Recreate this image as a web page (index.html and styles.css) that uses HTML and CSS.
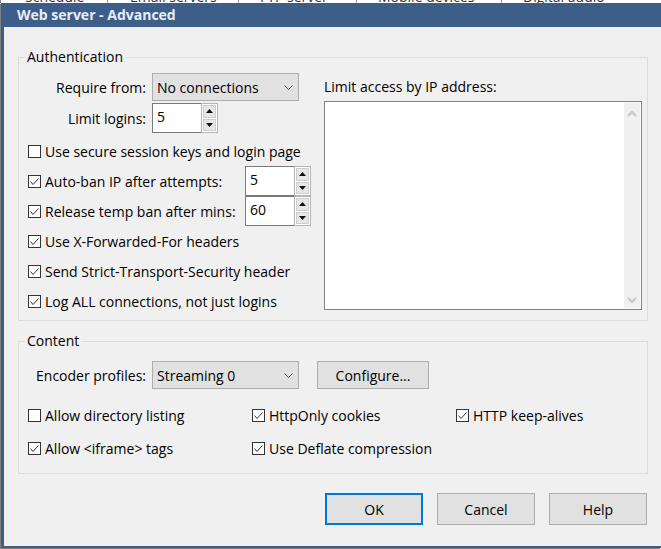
FILE: index.html
```html
<!DOCTYPE html>
<html lang="en">
<head>
<meta charset="utf-8">
<title>Web server - Advanced</title>
<link rel="stylesheet" href="styles.css">
</head>
<body>
<div class="tabstrip">
  <div class="tab tab-1"><span>Schedule</span></div>
  <div class="tab tab-2"><span>Email servers</span></div>
  <div class="tab tab-3"><span>FTP server</span></div>
  <div class="tab tab-4"><span>Mobile devices</span></div>
  <div class="tab tab-5"><span>Digital audio</span></div>
</div>
<div class="window">
  <div class="titlebar">Web server - Advanced</div>
  <div class="client">
    <fieldset class="group auth">
      <legend>Authentication</legend>
      <div class="auth-body">
        <div class="auth-left">
          <div class="field-row">
            <span class="field-label">Require from:</span>
            <div class="select"><span>No connections</span><svg class="chev" width="9" height="5" viewBox="0 0 9 5"><polyline points="0.5,0.5 4.5,4.5 8.5,0.5" fill="none" stroke="#555" stroke-width="1"/></svg></div>
          </div>
          <div class="field-row spin-field">
            <span class="field-label">Limit logins:</span>
            <div class="spinner"><div class="spin-edit">5</div><div class="spin-btns"><div class="spin-btn"><svg width="7" height="4" viewBox="0 0 7 4"><polygon points="0,4 3.5,0 7,4" fill="#111"/></svg></div><div class="spin-btn"><svg width="7" height="4" viewBox="0 0 7 4"><polygon points="0,0 3.5,4 7,0" fill="#111"/></svg></div></div></div>
          </div>
          <div class="check-row first">
            <span class="cb"></span><span>Use secure session keys and login page</span>
          </div>
          <div class="check-row">
            <div class="check-label"><span class="cb"><svg width="11" height="11" viewBox="0 0 11 11"><polyline points="1.5,5.5 4,8.5 9.5,2.5" fill="none" stroke="#333" stroke-width="1"/></svg></span><span>Auto-ban IP after attempts:</span></div>
            <div class="spinner"><div class="spin-edit">5</div><div class="spin-btns"><div class="spin-btn"><svg width="7" height="4" viewBox="0 0 7 4"><polygon points="0,4 3.5,0 7,4" fill="#111"/></svg></div><div class="spin-btn"><svg width="7" height="4" viewBox="0 0 7 4"><polygon points="0,0 3.5,4 7,0" fill="#111"/></svg></div></div></div>
          </div>
          <div class="check-row">
            <div class="check-label"><span class="cb"><svg width="11" height="11" viewBox="0 0 11 11"><polyline points="1.5,5.5 4,8.5 9.5,2.5" fill="none" stroke="#333" stroke-width="1"/></svg></span><span>Release temp ban after mins:</span></div>
            <div class="spinner"><div class="spin-edit">60</div><div class="spin-btns"><div class="spin-btn"><svg width="7" height="4" viewBox="0 0 7 4"><polygon points="0,4 3.5,0 7,4" fill="#111"/></svg></div><div class="spin-btn"><svg width="7" height="4" viewBox="0 0 7 4"><polygon points="0,0 3.5,4 7,0" fill="#111"/></svg></div></div></div>
          </div>
          <div class="check-row">
            <span class="cb"><svg width="11" height="11" viewBox="0 0 11 11"><polyline points="1.5,5.5 4,8.5 9.5,2.5" fill="none" stroke="#333" stroke-width="1"/></svg></span><span>Use X-Forwarded-For headers</span>
          </div>
          <div class="check-row">
            <span class="cb"><svg width="11" height="11" viewBox="0 0 11 11"><polyline points="1.5,5.5 4,8.5 9.5,2.5" fill="none" stroke="#333" stroke-width="1"/></svg></span><span>Send Strict-Transport-Security header</span>
          </div>
          <div class="check-row">
            <span class="cb"><svg width="11" height="11" viewBox="0 0 11 11"><polyline points="1.5,5.5 4,8.5 9.5,2.5" fill="none" stroke="#333" stroke-width="1"/></svg></span><span>Log ALL connections, not just logins</span>
          </div>
        </div>
        <div class="auth-right">
          <div class="ip-label">Limit access by IP address:</div>
          <div class="iplist">
            <div class="vscroll">
              <svg width="10" height="6" viewBox="0 0 10 6"><polyline points="1,5 5,1 9,5" fill="none" stroke="#c4c4c4" stroke-width="2"/></svg>
              <svg width="10" height="6" viewBox="0 0 10 6"><polyline points="1,1 5,5 9,1" fill="none" stroke="#c4c4c4" stroke-width="2"/></svg>
            </div>
          </div>
        </div>
      </div>
    </fieldset>

    <fieldset class="group content">
      <legend>Content</legend>
      <div class="content-body">
        <div class="field-row">
          <span class="field-label">Encoder profiles:</span>
          <div class="select"><span>Streaming 0</span><svg class="chev" width="9" height="5" viewBox="0 0 9 5"><polyline points="0.5,0.5 4.5,4.5 8.5,0.5" fill="none" stroke="#555" stroke-width="1"/></svg></div>
          <div class="btn configure">Configure...</div>
        </div>
        <div class="check-grid">
          <div class="check-cell"><span class="cb"></span><span>Allow directory listing</span></div>
          <div class="check-cell"><span class="cb"><svg width="11" height="11" viewBox="0 0 11 11"><polyline points="1.5,5.5 4,8.5 9.5,2.5" fill="none" stroke="#333" stroke-width="1"/></svg></span><span>HttpOnly cookies</span></div>
          <div class="check-cell"><span class="cb"><svg width="11" height="11" viewBox="0 0 11 11"><polyline points="1.5,5.5 4,8.5 9.5,2.5" fill="none" stroke="#333" stroke-width="1"/></svg></span><span>HTTP keep-alives</span></div>
          <div class="check-cell"><span class="cb"><svg width="11" height="11" viewBox="0 0 11 11"><polyline points="1.5,5.5 4,8.5 9.5,2.5" fill="none" stroke="#333" stroke-width="1"/></svg></span><span>Allow &lt;iframe&gt; tags</span></div>
          <div class="check-cell"><span class="cb"><svg width="11" height="11" viewBox="0 0 11 11"><polyline points="1.5,5.5 4,8.5 9.5,2.5" fill="none" stroke="#333" stroke-width="1"/></svg></span><span>Use Deflate compression</span></div>
        </div>
      </div>
    </fieldset>

    <div class="buttons">
      <div class="btn default">OK</div>
      <div class="btn">Cancel</div>
      <div class="btn">Help</div>
    </div>
  </div>
</div>
</body>
</html>
```
FILE: styles.css
```css
* { box-sizing: border-box; }
html, body { margin: 0; padding: 0; }
body {
  width: 661px;
  height: 549px;
  overflow: hidden;
  background: #fff;
  font-family: "Open Sans", "Noto Sans", sans-serif;
  font-size: 14px;
  color: #000;
}

/* tab strip of parent window, almost fully hidden */
.tabstrip {
  height: 3px;
  overflow: hidden;
  display: flex;
  align-items: flex-end;
  background: #fff;
  border-left: 1px solid #808080;
}
.tab {
  flex: none;
  height: 12px;
  line-height: 12px;
  font-size: 14px;
  color: #333;
  border-right: 1px solid #a0a0a0;
  white-space: nowrap;
}
.tab-1 { width: 107px; padding-left: 24px; }
.tab-2 { width: 131px; padding-left: 22px; }
.tab-3 { width: 118px; padding-left: 21px; }
.tab-4 { width: 145px; padding-left: 21px; }
.tab-5 { width: 160px; padding-left: 21px; border-right: none; }

.window {
  margin-left: 1px;
  height: 545px;
  border-left: 3px solid #3e5e8a;
  border-bottom: 2px solid #3e5e8a;
  box-shadow: -1px 1px 0 #808080;
  display: flex;
  flex-direction: column;
}
.titlebar {
  height: 24px;
  flex: none;
  background: #3e5e8a;
  color: #e9edf2;
  font-weight: 700;
  font-size: 14px;
  line-height: 24px;
  padding-left: 13px;
}
.client {
  flex: 1;
  background: #f0f0f0;
  padding: 20px 13px 0 14px;
  display: flex;
  flex-direction: column;
}

.group {
  margin: 0;
  padding: 0;
  min-width: 0;
  border: 1px solid #dcdcdc;
}
.group legend {
  margin-left: 6px;
  padding: 0 2px;
  line-height: 20px;
  height: 20px;
}

.auth-body {
  display: flex;
  gap: 13px;
  padding: 6px 5px 4px 9px;
}
.auth-left {
  width: 283px;
  flex: none;
  display: flex;
  flex-direction: column;
}
.auth-right {
  flex: 1;
  display: flex;
  flex-direction: column;
}

.field-row {
  display: flex;
  align-items: center;
  height: 28px;
}
.field-row.spin-field {
  height: 30px;
  margin-top: 2px;
}
.field-label {
  width: 118px;
  text-align: right;
  margin-right: 6px;
  white-space: nowrap;
}

.select {
  width: 147px;
  height: 28px;
  background: #e1e1e1;
  border: 1px solid #adadad;
  display: flex;
  align-items: center;
  justify-content: space-between;
  padding: 0 5px 0 4px;
}
.chev { flex: none; }

.spinner {
  width: 66px;
  height: 30px;
  display: flex;
  flex: none;
}
.spin-edit {
  width: 49px;
  background: #fff;
  border: 1px solid #7a7a7a;
  border-right: none;
  padding-left: 4px;
  line-height: 26px;
}
.spin-btns {
  flex: 1;
  background: #fff;
  border: 1px solid #b4b4b4;
  padding: 1px;
  display: flex;
  flex-direction: column;
  gap: 1px;
}
.spin-btn {
  flex: 1;
  background: #e6e6e6;
  border: 1px solid #cdcdcd;
  display: flex;
  align-items: center;
  justify-content: center;
}

.check-row {
  display: flex;
  align-items: center;
  height: 30px;
  white-space: nowrap;
}
.check-row.first { margin-top: 3px; }
.check-label {
  display: flex;
  align-items: center;
  flex: 1;
}
.cb {
  flex: none;
  width: 13px;
  height: 13px;
  border: 1px solid #333;
  background: #fff;
  margin-right: 4px;
  display: flex;
  align-items: center;
  justify-content: center;
}

.ip-label {
  height: 28px;
  line-height: 28px;
  white-space: nowrap;
}
.iplist {
  height: 209px;
  background: #fff;
  border: 1px solid #828282;
  padding: 1px;
  display: flex;
  justify-content: flex-end;
}
.vscroll {
  width: 16px;
  background: #f0f0f0;
  display: flex;
  flex-direction: column;
  justify-content: space-between;
  align-items: center;
  padding: 8px 0 5px;
}

.content { margin-top: 10px; }
.content-body {
  padding: 10px 5px 10px 9px;
}
.configure {
  margin-left: 18px;
  width: 112px;
  height: 28px;
}
.check-grid {
  display: grid;
  grid-template-columns: 224px 204px 1fr;
  grid-auto-rows: 30px;
  row-gap: 3px;
  margin-top: 11px;
}
.check-cell {
  display: flex;
  align-items: center;
  white-space: nowrap;
}

.btn {
  background: #e1e1e1;
  border: 1px solid #adadad;
  display: flex;
  align-items: center;
  justify-content: center;
}
.buttons {
  display: flex;
  justify-content: flex-end;
  gap: 14px;
  margin-top: 19px;
  margin-right: 1px;
}
.buttons .btn {
  width: 98px;
  height: 32px;
}
.buttons .btn.default {
  border: 2px solid #0078d7;
}
```
